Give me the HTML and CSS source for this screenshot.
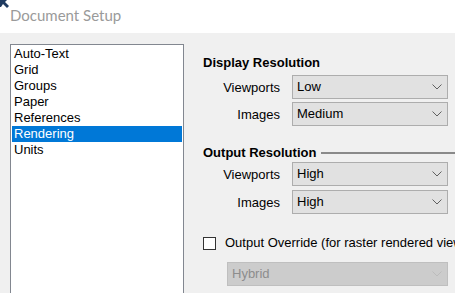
FILE: index.html
```html
<!DOCTYPE html>
<html>
<head>
<meta charset="utf-8">
<link rel="stylesheet" href="styles.css">
</head>
<body>
<div class="titlebar">
  <svg class="appicon" width="10" height="10" viewBox="0 0 10 10"><polygon points="0,0 7,0 5,2 9,6 7,8 3,4 1,7 0,7" fill="#1f3b60"/></svg>
  <span class="title">Document Setup</span>
</div>
<div class="content">
  <div class="listbox">
    <div class="item">Auto-Text</div>
    <div class="item">Grid</div>
    <div class="item">Groups</div>
    <div class="item">Paper</div>
    <div class="item">References</div>
    <div class="item selected">Rendering</div>
    <div class="item">Units</div>
  </div>
  <div class="panel">
    <div class="header">Display Resolution</div>
    <div class="rows first">
      <div class="label">Viewports</div>
      <div class="select"><span>Low</span><svg class="chev" width="10" height="6" viewBox="0 0 10 6"><polyline points="0.5,0.5 5,5 9.5,0.5" fill="none" stroke="#606060" stroke-width="1"/></svg></div>
      <div class="label">Images</div>
      <div class="select"><span>Medium</span><svg class="chev" width="10" height="6" viewBox="0 0 10 6"><polyline points="0.5,0.5 5,5 9.5,0.5" fill="none" stroke="#606060" stroke-width="1"/></svg></div>
    </div>
    <div class="header out"><span>Output Resolution</span><div class="rule"></div></div>
    <div class="rows second">
      <div class="label">Viewports</div>
      <div class="select"><span>High</span><svg class="chev" width="10" height="6" viewBox="0 0 10 6"><polyline points="0.5,0.5 5,5 9.5,0.5" fill="none" stroke="#606060" stroke-width="1"/></svg></div>
      <div class="label">Images</div>
      <div class="select"><span>High</span><svg class="chev" width="10" height="6" viewBox="0 0 10 6"><polyline points="0.5,0.5 5,5 9.5,0.5" fill="none" stroke="#606060" stroke-width="1"/></svg></div>
    </div>
    <div class="check">
      <div class="box"></div>
      <span class="checktext">Output Override (for raster rendered viewports)</span>
    </div>
    <div class="select disabled"><span>Hybrid</span><svg class="chev" width="10" height="6" viewBox="0 0 10 6"><polyline points="0.5,0.5 5,5 9.5,0.5" fill="none" stroke="#bcbcbc" stroke-width="1"/></svg></div>
  </div>
</div>
</body>
</html>
```
FILE: styles.css
```css
html, body {
  margin: 0;
  padding: 0;
  width: 455px;
  height: 293px;
  overflow: hidden;
  background: #f0f0f0;
  font-family: "Liberation Sans", Arial, sans-serif;
  font-size: 13px;
  color: #000;
}
.titlebar {
  height: 33px;
  background: #fff;
  position: relative;
  display: flex;
  align-items: flex-start;
}
.appicon {
  position: absolute;
  left: 0;
  top: 0;
}
.title {
  margin: 5px 0 0 10px;
  font-family: Lato, "Noto Sans", sans-serif;
  font-size: 15px;
  line-height: 20px;
  color: #9a9a9a;
}
.content {
  display: flex;
  padding: 11px 0 0 10px;
}
.listbox {
  width: 174px;
  height: 260px;
  box-sizing: border-box;
  border: 1px solid #828790;
  background: #fff;
  padding: 1px;
  flex: none;
}
.item {
  height: 16px;
  line-height: 16px;
  padding-left: 2px;
  white-space: nowrap;
}
.item.selected {
  background: #0078d7;
  color: #fff;
}
.panel {
  margin-left: 19px;
  padding-top: 11px;
  flex: 1;
  min-width: 0;
  overflow: hidden;
}
.header {
  font-weight: bold;
  line-height: 16px;
  height: 16px;
  white-space: nowrap;
}
.header.out {
  display: flex;
  align-items: center;
  gap: 5px;
  margin-top: 19px;
}
.rule {
  flex: 1;
  height: 2px;
  background: #8a8a8a;
}
.rows {
  display: grid;
  grid-template-columns: 77px 156px;
  column-gap: 12px;
  row-gap: 3px;
  align-items: center;
}
.rows.first { margin-top: 4px; }
.rows.second { margin-top: 1px; row-gap: 4px; }
.label {
  text-align: right;
}
.select {
  height: 24px;
  box-sizing: border-box;
  border: 1px solid #adadad;
  background: #e1e1e1;
  display: flex;
  align-items: center;
  justify-content: space-between;
  padding: 0 4px 0 4px;
}
.select span { line-height: 16px; }
.chev { flex: none; margin-right: 1px; }
.check {
  display: flex;
  align-items: center;
  gap: 9px;
  margin-top: 21px;
  white-space: nowrap;
  overflow: hidden;
}
.box {
  width: 13px;
  height: 13px;
  box-sizing: border-box;
  border: 1px solid #333;
  background: #fff;
  flex: none;
}
.checktext { line-height: 16px; }
.select.disabled {
  margin-top: 11px;
  margin-left: 24px;
  width: 221px;
  background: #cccccc;
  border-color: #bfbfbf;
  color: #8d8d8d;
}
```
